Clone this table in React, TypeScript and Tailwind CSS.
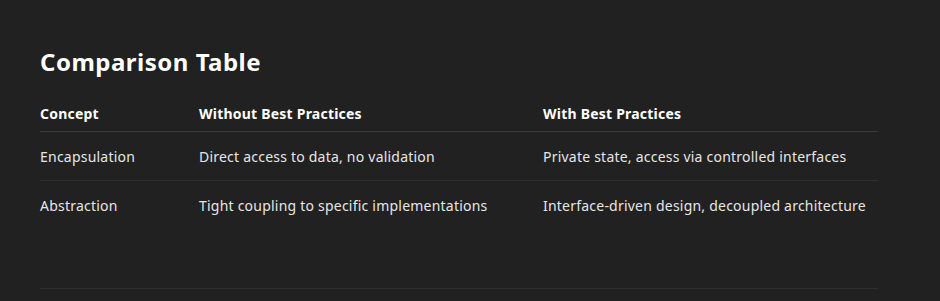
export default function App() {
  const rows = [
    ["Encapsulation", "Direct access to data, no validation", "Private state, access via controlled interfaces"],
    ["Abstraction", "Tight coupling to specific implementations", "Interface-driven design, decoupled architecture"],
  ];
  return (
    <div className="w-[940px] h-[301px] bg-[#212121] px-10 pt-[46px] overflow-hidden" style={{ fontFamily: '"Noto Sans", sans-serif' }}>
      <h2 className="text-[24px] leading-[32px] font-bold text-white tracking-[0.5px]">Comparison Table</h2>
      <table className="w-[838px] mt-[19px] border-collapse text-[14px] leading-[20px] tracking-[0.22px]">
        <thead>
          <tr className="border-b border-[#3a3a3a]">
            <th className="w-[159px] text-left font-bold text-white pt-[7px] pb-[7px]">Concept</th>
            <th className="w-[344px] text-left font-bold text-white pt-[7px] pb-[7px]">Without Best Practices</th>
            <th className="text-left font-bold text-white pt-[7px] pb-[7px]">With Best Practices</th>
          </tr>
        </thead>
        <tbody className="text-[#e6e6e6]">
          {rows.map((r, i) => (
            <tr key={i} className={i === 0 ? "border-b border-[#2e2e2e]" : ""}>
              {r.map((c, j) => (
                <td key={j} className="pt-[15px] pb-[13px]">{c}</td>
              ))}
            </tr>
          ))}
        </tbody>
      </table>
      <div className="mt-[59px] border-t border-[#2e2e2e] w-[838px]" />
    </div>
  );
}
